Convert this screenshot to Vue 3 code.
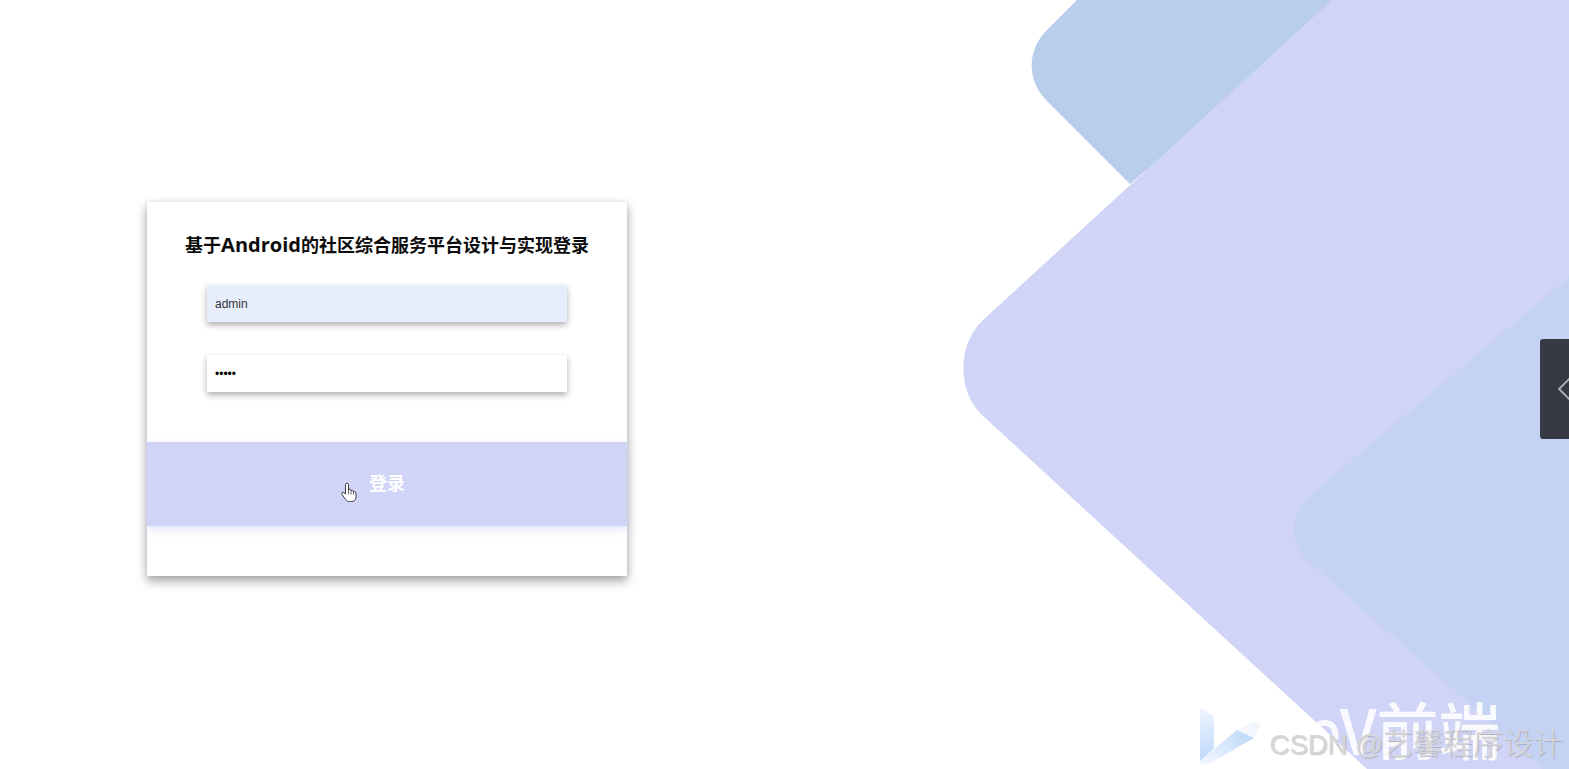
<script setup>
</script>

<template>
  <div class="page">
    <svg class="shapes" viewBox="0 0 1569 769" aria-hidden="true">
      <path class="blue" d="M1077 0 L1047 30 C1027 50 1026 80 1047 101 L1130 184 L1345 0 Z" />
      <path class="lav" d="M1332 0 L983 320 C958 343 956 390 982 415 L1367 769 L1569 769 L1569 0 Z" />
      <path class="pale" d="M1569 277 L1313 493 C1290 512 1288 542 1307 560 L1569 792 Z" />
    </svg>

    <form class="card" @submit.prevent>
      <h1 class="title">基于<span class="title-latin">Android</span>的社区综合服务平台设计与实现登录</h1>
      <input class="field field-filled" type="text" value="admin" readonly />
      <input class="field" type="password" value="12345" readonly />
      <button class="submit" type="button">登录</button>
    </form>

    <svg class="cursor" viewBox="0 0 16 20" aria-hidden="true">
      <path d="M4.5 2.5C4.5 .8 7.5 .8 7.5 2.5V8C7.8 6.8 9.8 6.9 10 8.2V9C10.4 8 12.2 8.2 12.4 9.4V10C12.8 9.2 14.8 9.4 15 10.8V15C15 18 13 19.6 10.5 19.6H8.5C6.5 19.6 5.6 18.8 4.6 17.4L1 12.5C0 11 1.8 9.6 3 10.6L4.5 12Z" />
      <path d="M7.5 8V12.5M10 8.8V12.5M12.4 9.8V12.5" />
    </svg>

    <div class="handle">
      <span class="chevron"></span>
    </div>

    <div class="mark">
      <svg class="mark-logo" viewBox="0 0 64 64" aria-hidden="true">
        <defs>
          <linearGradient id="logoBand" x1="0" y1="0" x2="0" y2="1">
            <stop offset="0" stop-color="#eef3fc" />
            <stop offset="1" stop-color="#bdd8fb" />
          </linearGradient>
          <linearGradient id="logoRibbon" x1="0" y1="1" x2="1" y2="0.4">
            <stop offset="0" stop-color="#f5f8fe" />
            <stop offset="1" stop-color="#c3dbfb" />
          </linearGradient>
        </defs>
        <path fill="url(#logoBand)" d="M1 3L15 11V43L1 57Z" />
        <path fill="#f3f6fd" d="M38 25L54 17C60 15 63 20 59 24L55 33Z" />
        <path fill="url(#logoRibbon)" d="M1 56L38 25L55 33L10 59C4 62 0 60 1 56Z" />
      </svg>
      <span class="mark-brand">eV前端</span>
      <span class="mark-text"><span class="mark-latin">CSDN @</span>艺馨程序设计</span>
    </div>
  </div>
</template>

<style>
html, body { margin: 0; background: #fff; }
</style>

<style scoped>
.page {
  position: relative;
  width: 1569px;
  height: 769px;
  overflow: hidden;
  background: #fff;
  font-family: "Liberation Sans", "Noto Sans CJK SC", sans-serif;
}
.shapes { position: absolute; inset: 0; width: 100%; height: 100%; }
.blue { fill: #b8ceeb; }
.lav { fill: #d0d4f6; }
.pale { fill: #c4d2f3; }

.card {
  position: relative;
  display: flex;
  flex-direction: column;
  align-items: center;
  box-sizing: border-box;
  width: 480px;
  height: 374px;
  margin: 202px 0 0 147px;
  padding-top: 29px;
  background: #fff;
  box-shadow: 0 5px 10px rgba(0, 0, 0, 0.36), 0 0 6px rgba(0, 0, 0, 0.07);
}
.title {
  margin: 0 0 27px;
  font-family: "Noto Sans CJK SC", sans-serif;
  font-size: 18px;
  font-weight: 700;
  line-height: 27px;
  color: #0c0c0c;
  white-space: nowrap;
}
.title-latin {
  font-family: "Open Sans", "Noto Sans CJK SC", sans-serif;
  font-size: 20px;
  font-weight: 700;
}
.field {
  display: block;
  box-sizing: border-box;
  width: 360px;
  height: 37px;
  margin: 0 0 33px;
  padding: 0 8px;
  border: 0;
  outline: 0;
  border-radius: 1px;
  background: #fff;
  box-shadow: 0 3px 6px rgba(0, 0, 0, 0.32);
  font-family: "Liberation Sans", sans-serif;
  font-size: 12px;
  color: #000;
}
.field-filled { background: #e6edfb; color: #333; }
.submit {
  display: block;
  width: 480px;
  height: 84px;
  margin-top: 17px;
  padding: 0 0 4px;
  border: 0;
  background: #d0d4f6;
  box-shadow: 0 3px 8px rgba(208, 212, 246, 0.7);
  font-family: "Noto Sans CJK SC", sans-serif;
  font-size: 18px;
  font-weight: 700;
  color: #fff;
  cursor: pointer;
}
.cursor {
  position: absolute;
  left: 341px;
  top: 482px;
  width: 16px;
  height: 20px;
  fill: #fff;
  stroke: #2a2a33;
  stroke-width: 0.9;
  stroke-linejoin: round;
}
.cursor path + path { fill: none; stroke-width: 0.7; }

.handle {
  position: absolute;
  left: 1540px;
  top: 339px;
  width: 40px;
  height: 100px;
  border-radius: 3px 0 0 3px;
  background: #373a43;
}
.chevron {
  position: absolute;
  left: 21px;
  top: 42px;
  width: 16px;
  height: 16px;
  box-sizing: border-box;
  border: 2.5px solid #a9abae;
  transform: rotate(45deg);
}

.mark { position: absolute; inset: 0; pointer-events: none; }
.mark-logo { position: absolute; left: 1199px; top: 705px; width: 64px; height: 64px; filter: blur(0.5px); }
.mark-brand {
  position: absolute;
  left: 1306px;
  top: 692px;
  font-family: "Noto Sans CJK SC", sans-serif;
  font-size: 62px;
  font-weight: 500;
  line-height: 72px;
  color: #fff;
  opacity: 0.9;
  white-space: nowrap;
  filter: blur(0.6px);
}
.mark-text {
  position: absolute;
  right: 6px;
  top: 723px;
  font-family: "Noto Sans CJK SC", sans-serif;
  font-size: 30px;
  font-weight: 300;
  line-height: 36px;
  color: #d6d6da;
  text-shadow: 1px 1px 1px rgba(120, 120, 120, 0.4);
  white-space: nowrap;
}
.mark-latin { font-family: "Liberation Sans", sans-serif; font-size: 27.5px; }
</style>
